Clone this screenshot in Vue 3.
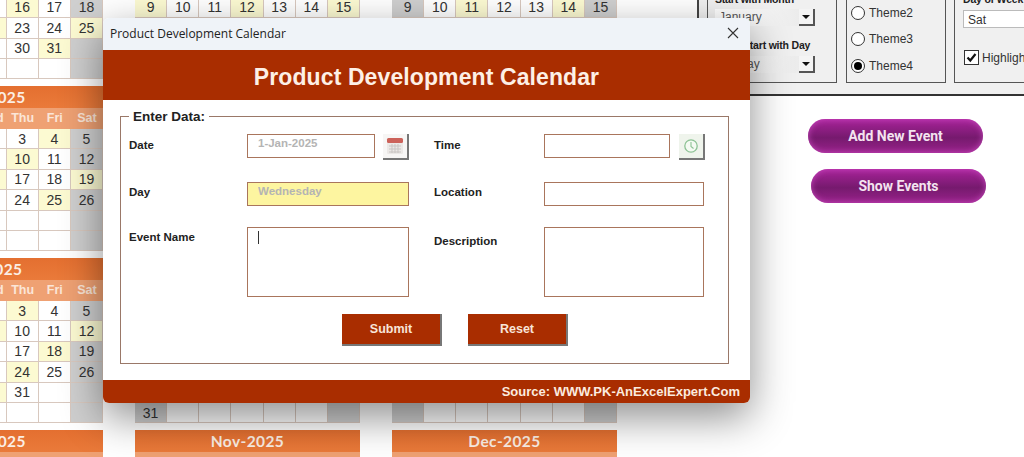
<template>
  <div class="page">
    <div class="sheet">
      <div class="calendars">
        <div v-for="cal in calendars" :key="cal.title" class="cal">
          <div class="cal-title">{{ cal.title }}</div>
          <div class="cal-days">
            <span v-for="d in dayNames" :key="d">{{ d }}</span>
          </div>
          <div class="cal-grid">
            <div v-for="(c, i) in cal.cells" :key="i" class="cell" :class="c.kind">{{ c.day }}</div>
          </div>
        </div>
      </div>

      <div class="side">
        <div class="panel">
          <div class="group group-start">
            <label class="group-label">Start with Month</label>
            <div class="combo">
              <span>January</span>
              <span class="combo-btn"><i></i></span>
            </div>
            <label class="group-label second">Start with Day</label>
            <div class="combo lower">
              <span>Sunday</span>
              <span class="combo-btn"><i></i></span>
            </div>
          </div>
          <div class="group group-theme">
            <div v-for="t in themes" :key="t" class="radio-row">
              <span class="radio" :class="{ on: t === 'Theme4' }"></span>
              <span>{{ t }}</span>
            </div>
          </div>
          <div class="group group-week">
            <label class="group-label">Day of Week</label>
            <div class="week-input">Sat</div>
            <div class="check-row">
              <span class="check">
                <svg width="11" height="11" viewBox="0 0 11 11"><path d="M1.5 5.5 L4.3 8.5 L9.5 2" fill="none" stroke="#111" stroke-width="2.2" /></svg>
              </span>
              <span>Highlight Saturday</span>
            </div>
          </div>
        </div>
        <button class="pill pill-add">Add New Event</button>
        <button class="pill pill-show">Show Events</button>
      </div>
    </div>

    <div class="dialog">
      <div class="titlebar">
        <span>Product Development Calendar</span>
        <svg class="close" width="12" height="12" viewBox="0 0 12 12"><path d="M1 1 L11 11 M11 1 L1 11" stroke="#333" stroke-width="1.1" /></svg>
      </div>
      <div class="banner">Product Development Calendar</div>
      <div class="dialog-body">
        <fieldset class="entry">
          <legend>Enter Data:</legend>
          <div class="form-grid">
            <label class="first">Date</label>
            <div class="with-btn">
              <input class="box faded" value="1-Jan-2025" readonly />
              <button class="pick">
                <svg width="20" height="20" viewBox="0 0 20 20">
                  <rect x="2" y="2" width="16" height="16" rx="1.5" fill="#ebe8e6" />
                  <rect x="2" y="2" width="16" height="5" rx="1.5" fill="#cc625a" />
                  <path d="M4 10 H16 M4 13 H16 M4 16 H16 M7 8 V17 M10 8 V17 M13 8 V17" stroke="#c9c5c3" stroke-width="1" />
                </svg>
              </button>
            </div>
            <span></span>
            <label class="first">Time</label>
            <div class="with-btn time">
              <input class="box" readonly />
              <button class="pick pick-clock">
                <svg width="16" height="16" viewBox="0 0 16 16">
                  <circle cx="8" cy="8" r="6.2" fill="#f4faf2" stroke="#8cc294" stroke-width="1.3" />
                  <path d="M8 4 V8.5 L10.5 10.5" fill="none" stroke="#8cc294" stroke-width="1.1" />
                </svg>
              </button>
            </div>

            <label>Day</label>
            <input class="box faded yellow" value="Wednesday" readonly />
            <span></span>
            <label>Location</label>
            <input class="box" readonly />

            <label>Event Name</label>
            <div class="box area"><span class="caret"></span></div>
            <span></span>
            <label class="lower">Description</label>
            <div class="box area"></div>
          </div>
          <div class="actions">
            <button class="act">Submit</button>
            <button class="act">Reset</button>
          </div>
        </fieldset>
      </div>
      <div class="source">Source: WWW.PK-AnExcelExpert.Com</div>
    </div>
  </div>
</template>

<script setup>
const dayNames = ['Sun', 'Mon', 'Tue', 'Wed', 'Thu', 'Fri', 'Sat']
const themes = ['Theme1', 'Theme2', 'Theme3', 'Theme4']
const monthNames = ['Jan', 'Feb', 'Mar', 'Apr', 'May', 'Jun', 'Jul', 'Aug', 'Sep', 'Oct', 'Nov', 'Dec']

// days with an event get the yellow cell
const events = {
  0: [16, 22, 25, 31],
  1: [9, 12, 15],
  2: [11, 14],
  3: [4, 10, 16, 19, 25],
  6: [3, 9, 12, 18, 24, 30]
}

const buildMonth = (m) => {
  const first = new Date(2025, m, 1).getDay()
  const total = new Date(2025, m + 1, 0).getDate()
  const cells = []
  for (let i = 0; i < 42; i++) {
    const day = i - first + 1
    const valid = day >= 1 && day <= total
    let kind = i % 7 === 0 || i % 7 === 6 ? 'weekend' : ''
    if (valid && (events[m] || []).includes(day)) kind = 'event'
    cells.push({ day: valid ? day : '', kind })
  }
  return { title: monthNames[m] + '-2025', cells }
}

// three columns, read top to bottom
const calendars = [0, 3, 6, 9, 1, 4, 7, 10, 2, 5, 8, 11].map(buildMonth)
</script>

<style scoped>
.page {
  position: relative;
  width: 1024px;
  height: 457px;
  overflow: hidden;
  background: #fff;
  font-family: "Liberation Sans", Arial, sans-serif;
  color: #333;
}

.sheet {
  display: flex;
  margin-left: -122px;
  margin-top: -86px;
}

.calendars {
  display: grid;
  grid-template-columns: repeat(3, 225px);
  grid-template-rows: repeat(4, 165.4px);
  grid-auto-flow: column;
  column-gap: 32px;
  row-gap: 6.6px;
  flex: none;
}

.cal-title {
  height: 22px;
  line-height: 22px;
  text-align: center;
  background: linear-gradient(#e46f30, #ea7a3a);
  color: #fbeee4;
  font-family: Lato, sans-serif;
  font-weight: 700;
  font-size: 15.5px;
  letter-spacing: 0.4px;
}

.cal-days {
  display: grid;
  grid-template-columns: repeat(7, 1fr);
  height: 21px;
  line-height: 21px;
  background: #efa173;
  color: #fbe6d8;
  font-size: 12.5px;
  font-weight: 700;
  text-align: center;
}

.cal-grid {
  display: grid;
  grid-template-columns: repeat(7, 1fr);
  grid-auto-rows: 20.4px;
}

.cell {
  display: flex;
  align-items: center;
  justify-content: center;
  background: #fff;
  border-right: 1px solid #d8c8be;
  border-bottom: 1px solid #d8c8be;
  font-size: 14px;
  box-sizing: border-box;
}

.cell.weekend {
  background: #cfcfcf;
}

.cell.event {
  background: #fcfad2;
}

.side {
  flex: none;
  margin-left: 80px;
  width: 327px;
}

.panel {
  display: flex;
  align-items: flex-start;
  height: 182px;
  box-sizing: border-box;
  background: #f0f0f0;
  border-left: 2px solid #444;
  border-bottom: 2px solid #333;
  padding: 20px 0 0 8px;
  font-size: 12px;
}

.group {
  border: 1px solid #555;
  height: 149px;
  box-sizing: border-box;
  flex: none;
}

.group-label {
  display: block;
  font-weight: 700;
  font-size: 10.5px;
  letter-spacing: -0.2px;
  line-height: 13px;
  color: #222;
  white-space: nowrap;
}

.group-start {
  width: 130px;
  padding: 58px 21px 0 7px;
}

.group-start .group-label.second {
  margin-top: 13px;
  margin-left: 28px;
}

.combo {
  display: flex;
  justify-content: space-between;
  height: 17px;
  margin-top: 3px;
  background: linear-gradient(90deg, #fff, #e8e8e8);
  color: #555;
  line-height: 17px;
  padding-left: 4px;
}

.combo.lower {
  margin-top: 4px;
}

.combo-btn {
  display: flex;
  align-items: center;
  justify-content: center;
  width: 16px;
  background: #f4f4f4;
  border-right: 2px solid #555;
  border-bottom: 2px solid #555;
  box-sizing: border-box;
}

.combo-btn i {
  border-left: 4px solid transparent;
  border-right: 4px solid transparent;
  border-top: 4px solid #111;
  border-bottom: 0;
}

.group-theme {
  width: 100px;
  margin-left: 9px;
  padding: 38px 0 0 3px;
}

.radio-row {
  display: flex;
  align-items: center;
  gap: 4px;
  height: 26.5px;
  font-size: 12px;
}

.radio {
  width: 14px;
  height: 14px;
  border: 1px solid #333;
  border-radius: 50%;
  background: #fff;
  box-sizing: border-box;
  display: flex;
  align-items: center;
  justify-content: center;
  margin-left: 1px;
}

.radio.on::after {
  content: "";
  width: 8px;
  height: 8px;
  border-radius: 50%;
  background: #000;
}

.group-week {
  width: 130px;
  margin-left: 8px;
  padding: 58px 0 0 8px;
}

.week-input {
  width: 140px;
  height: 18px;
  line-height: 18px;
  margin-top: 4px;
  padding-left: 4px;
  background: #fff;
  border: 1px solid #bbb;
  box-sizing: border-box;
  font-size: 12px;
}

.check-row {
  display: flex;
  align-items: center;
  gap: 3px;
  margin-top: 22px;
  margin-left: 1px;
  font-size: 12px;
  white-space: nowrap;
}

.check {
  display: flex;
  align-items: center;
  justify-content: center;
  width: 13px;
  height: 13px;
  background: #fff;
  border: 1px solid #333;
  flex: none;
}

.pill {
  display: block;
  width: 175px;
  height: 34px;
  border: 0;
  border-radius: 17px;
  background: linear-gradient(#a8239a, #761a6e 55%, #98228a);
  box-shadow: inset 0 0 6px rgba(214, 86, 204, 0.75);
  color: #f4e3f0;
  font-family: Roboto, sans-serif;
  font-weight: 700;
  font-size: 14px;
  padding: 0;
}

.pill-add {
  margin: 23px 0 0 111px;
}

.pill-show {
  margin: 16px 0 0 114px;
}

.dialog {
  position: absolute;
  left: 103px;
  top: 18px;
  width: 647px;
  height: 385px;
  display: flex;
  flex-direction: column;
  background: #fff;
  border-radius: 6px;
  box-shadow: 0 14px 42px rgba(0, 0, 0, 0.45);
  overflow: hidden;
}

.titlebar {
  display: flex;
  align-items: center;
  justify-content: space-between;
  height: 32px;
  flex: none;
  box-sizing: border-box;
  background: #eff3f8;
  padding: 0 11px 2px 7px;
  font-family: "Open Sans", sans-serif;
  font-size: 12px;
  color: #222;
}

.banner {
  height: 50px;
  line-height: 55px;
  flex: none;
  text-align: center;
  background: #a92d00;
  color: #fdf0e6;
  font-weight: 700;
  font-size: 23px;
  letter-spacing: 0.1px;
}

.dialog-body {
  flex: 1;
  min-height: 0;
}

.entry {
  margin: 8px 21px 0 17px;
  padding: 10px 0 17px 8px;
  border: 1px solid #9a7868;
  min-width: 0;
}

.entry legend {
  margin-left: 0;
  padding: 0 4px;
  height: 16px;
  font-weight: 700;
  font-size: 13.5px;
  line-height: 18px;
  color: #222;
}

.form-grid {
  display: grid;
  grid-template-columns: 118px 162px 25px 110px 160px;
  grid-template-rows: 27px 24px 70px;
  row-gap: 21px;
}

.form-grid label {
  font-weight: 700;
  font-size: 11.5px;
  line-height: 14px;
  padding-top: 3px;
  color: #222;
}

.form-grid label.first {
  padding-top: 4px;
}

.form-grid label.lower {
  padding-top: 7px;
}

.box {
  display: block;
  width: 100%;
  height: 24px;
  box-sizing: border-box;
  border: 1px solid #a9755c;
  background: #fff;
  padding: 0 10px;
  font-family: "Liberation Sans", Arial, sans-serif;
  font-size: 11.5px;
  outline: none;
}

.box.faded {
  color: #b4b4b4;
  font-weight: 700;
  padding-bottom: 6px;
}

.box.yellow {
  background: #fdf5a0;
}

.box.area {
  height: 70px;
  padding: 3px 10px;
}

.caret {
  display: block;
  width: 1px;
  height: 13px;
  background: #333;
}

.with-btn {
  display: flex;
  align-items: flex-start;
  gap: 8px;
}

.with-btn .box {
  width: 128px;
  flex: none;
}

.with-btn.time {
  gap: 9px;
}

.with-btn.time .box {
  width: 126px;
}

.pick {
  display: flex;
  align-items: center;
  justify-content: center;
  width: 26px;
  height: 26px;
  flex: none;
  padding: 0;
  background: #f7f6f5;
  border: 0;
  border-right: 2px solid #777;
  border-bottom: 2px solid #777;
  box-sizing: border-box;
}

.pick-clock {
  background: #eff4ec;
}

.actions {
  display: flex;
  gap: 26px;
  margin: 17px 0 0 213px;
}

.act {
  width: 100px;
  height: 32px;
  box-sizing: border-box;
  padding: 0;
  background: #a92d00;
  border: 0;
  border-right: 2px solid #777;
  border-bottom: 2px solid #777;
  color: #f8e4d8;
  font-family: "Liberation Sans", Arial, sans-serif;
  font-weight: 700;
  font-size: 12.5px;
}

.source {
  height: 23px;
  line-height: 23px;
  flex: none;
  text-align: right;
  background: #a92d00;
  color: #fbeadf;
  padding-right: 10px;
  font-weight: 700;
  font-size: 13px;
}
</style>
